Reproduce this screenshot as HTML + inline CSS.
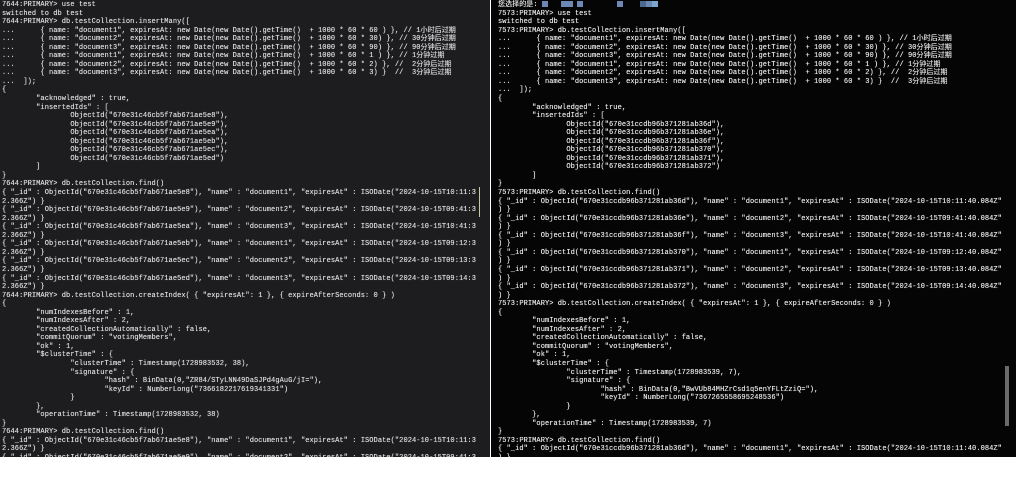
<!DOCTYPE html>
<html><head><meta charset="utf-8"><style>
html,body{margin:0;padding:0;width:1024px;height:478px;background:#fff;overflow:hidden}
.pane{position:absolute;top:0;height:457px;overflow:hidden}
#l{left:0;width:490px;background:#1d1d1f}
#r{left:491px;width:525px;background:#050505}
pre{margin:0;position:absolute;top:1px;font-family:"Liberation Mono","Noto Sans CJK SC",monospace;font-size:7px;letter-spacing:0.07px;line-height:8.54px;white-space:pre;color:#dadada;text-shadow:0 0 0.4px #ddd}
#l pre{left:2px}
#r pre{left:7px;color:#e6e6e6}
.sb{position:absolute;background:#8a8a8a}
.blk{display:inline-block;width:6px;height:6px;vertical-align:middle;background:#6e88b5}
</style></head><body>
<div class="pane" id="l"><pre>7644:PRIMARY&gt; use test
switched to db test
7644:PRIMARY&gt; db.testCollection.insertMany([
...      { name: "document1", expiresAt: new Date(new Date().getTime()  + 1000 * 60 * 60 ) }, // 1小时后过期
...      { name: "document2", expiresAt: new Date(new Date().getTime()  + 1000 * 60 * 30) }, // 30分钟后过期
...      { name: "document3", expiresAt: new Date(new Date().getTime()  + 1000 * 60 * 90) }, // 90分钟后过期
...      { name: "document1", expiresAt: new Date(new Date().getTime()  + 1000 * 60 * 1 ) }, // 1分钟过期
...      { name: "document2", expiresAt: new Date(new Date().getTime()  + 1000 * 60 * 2) }, //  2分钟后过期
...      { name: "document3", expiresAt: new Date(new Date().getTime()  + 1000 * 60 * 3) }  //  3分钟后过期
...  ]);
{
        "acknowledged" : true,
        "insertedIds" : [
                ObjectId("670e31c46cb5f7ab671ae5e8"),
                ObjectId("670e31c46cb5f7ab671ae5e9"),
                ObjectId("670e31c46cb5f7ab671ae5ea"),
                ObjectId("670e31c46cb5f7ab671ae5eb"),
                ObjectId("670e31c46cb5f7ab671ae5ec"),
                ObjectId("670e31c46cb5f7ab671ae5ed")
        ]
}
7644:PRIMARY&gt; db.testCollection.find()
{ "_id" : ObjectId("670e31c46cb5f7ab671ae5e8"), "name" : "document1", "expiresAt" : ISODate("2024-10-15T10:11:3
2.366Z") }
{ "_id" : ObjectId("670e31c46cb5f7ab671ae5e9"), "name" : "document2", "expiresAt" : ISODate("2024-10-15T09:41:3
2.366Z") }
{ "_id" : ObjectId("670e31c46cb5f7ab671ae5ea"), "name" : "document3", "expiresAt" : ISODate("2024-10-15T10:41:3
2.366Z") }
{ "_id" : ObjectId("670e31c46cb5f7ab671ae5eb"), "name" : "document1", "expiresAt" : ISODate("2024-10-15T09:12:3
2.366Z") }
{ "_id" : ObjectId("670e31c46cb5f7ab671ae5ec"), "name" : "document2", "expiresAt" : ISODate("2024-10-15T09:13:3
2.366Z") }
{ "_id" : ObjectId("670e31c46cb5f7ab671ae5ed"), "name" : "document3", "expiresAt" : ISODate("2024-10-15T09:14:3
2.366Z") }
7644:PRIMARY&gt; db.testCollection.createIndex( { "expiresAt": 1 }, { expireAfterSeconds: 0 } )
{
        "numIndexesBefore" : 1,
        "numIndexesAfter" : 2,
        "createdCollectionAutomatically" : false,
        "commitQuorum" : "votingMembers",
        "ok" : 1,
        "$clusterTime" : {
                "clusterTime" : Timestamp(1728983532, 38),
                "signature" : {
                        "hash" : BinData(0,"ZR84/STyLNN49DaSJPd4gAuG/jI="),
                        "keyId" : NumberLong("7366182217619341331")
                }
        },
        "operationTime" : Timestamp(1728983532, 38)
}
7644:PRIMARY&gt; db.testCollection.find()
{ "_id" : ObjectId("670e31c46cb5f7ab671ae5e8"), "name" : "document1", "expiresAt" : ISODate("2024-10-15T10:11:3
2.366Z") }
{ "_id" : ObjectId("670e31c46cb5f7ab671ae5e9"), "name" : "document2", "expiresAt" : ISODate("2024-10-15T09:41:3</pre>
<div class="sb" style="left:479px;top:187px;width:1px;height:30px;background:#c8c8a0"></div>
</div>
<div class="pane" id="r"><pre>您选择的是: <span class="blk"></span>   <span class="blk"></span><span class="blk"></span> <span class="blk"></span>        <span class="blk"></span>    <span class="blk" style="background:#4a6a90"></span><span class="blk"></span><span class="blk" style="background:#7aa8d0"></span>
7573:PRIMARY&gt; use test
switched to db test
7573:PRIMARY&gt; db.testCollection.insertMany([
...      { name: "document1", expiresAt: new Date(new Date().getTime()  + 1000 * 60 * 60 ) }, // 1小时后过期
...      { name: "document2", expiresAt: new Date(new Date().getTime()  + 1000 * 60 * 30) }, // 30分钟后过期
...      { name: "document3", expiresAt: new Date(new Date().getTime()  + 1000 * 60 * 90) }, // 90分钟后过期
...      { name: "document1", expiresAt: new Date(new Date().getTime()  + 1000 * 60 * 1 ) }, // 1分钟过期
...      { name: "document2", expiresAt: new Date(new Date().getTime()  + 1000 * 60 * 2) }, //  2分钟后过期
...      { name: "document3", expiresAt: new Date(new Date().getTime()  + 1000 * 60 * 3) }  //  3分钟后过期
...  ]);
{
        "acknowledged" : true,
        "insertedIds" : [
                ObjectId("670e31ccdb96b371281ab36d"),
                ObjectId("670e31ccdb96b371281ab36e"),
                ObjectId("670e31ccdb96b371281ab36f"),
                ObjectId("670e31ccdb96b371281ab370"),
                ObjectId("670e31ccdb96b371281ab371"),
                ObjectId("670e31ccdb96b371281ab372")
        ]
}
7573:PRIMARY&gt; db.testCollection.find()
{ "_id" : ObjectId("670e31ccdb96b371281ab36d"), "name" : "document1", "expiresAt" : ISODate("2024-10-15T10:11:40.084Z"
) }
{ "_id" : ObjectId("670e31ccdb96b371281ab36e"), "name" : "document2", "expiresAt" : ISODate("2024-10-15T09:41:40.084Z"
) }
{ "_id" : ObjectId("670e31ccdb96b371281ab36f"), "name" : "document3", "expiresAt" : ISODate("2024-10-15T10:41:40.084Z"
) }
{ "_id" : ObjectId("670e31ccdb96b371281ab370"), "name" : "document1", "expiresAt" : ISODate("2024-10-15T09:12:40.084Z"
) }
{ "_id" : ObjectId("670e31ccdb96b371281ab371"), "name" : "document2", "expiresAt" : ISODate("2024-10-15T09:13:40.084Z"
) }
{ "_id" : ObjectId("670e31ccdb96b371281ab372"), "name" : "document3", "expiresAt" : ISODate("2024-10-15T09:14:40.084Z"
) }
7573:PRIMARY&gt; db.testCollection.createIndex( { "expiresAt": 1 }, { expireAfterSeconds: 0 } )
{
        "numIndexesBefore" : 1,
        "numIndexesAfter" : 2,
        "createdCollectionAutomatically" : false,
        "commitQuorum" : "votingMembers",
        "ok" : 1,
        "$clusterTime" : {
                "clusterTime" : Timestamp(1728983539, 7),
                "signature" : {
                        "hash" : BinData(0,"BwVUb84MHZrCsd1q5enYFLtZziQ="),
                        "keyId" : NumberLong("7367265558695248536")
                }
        },
        "operationTime" : Timestamp(1728983539, 7)
}
7573:PRIMARY&gt; db.testCollection.find()
{ "_id" : ObjectId("670e31ccdb96b371281ab36d"), "name" : "document1", "expiresAt" : ISODate("2024-10-15T10:11:40.084Z"
) }</pre>
<div class="sb" style="left:514px;top:366px;width:4px;height:60px;background:#6a6a6a"></div>
</div>
</body></html>
